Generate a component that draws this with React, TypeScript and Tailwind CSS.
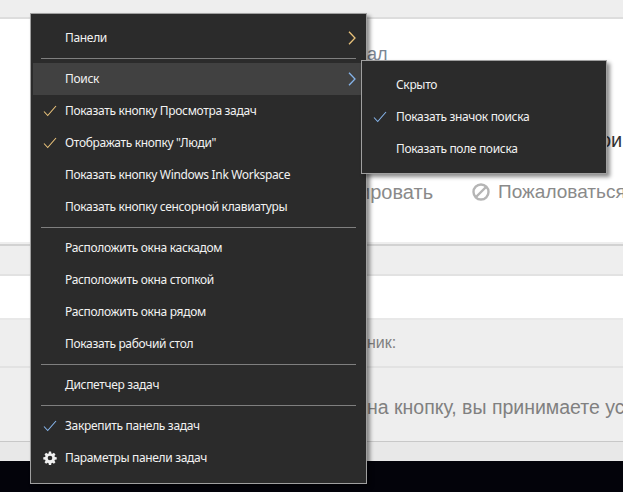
const font = "font-['Noto_Sans',sans-serif] tracking-[-0.33px]";

type MenuRow =
  | { kind: "sep" }
  | { kind: "item"; label: string; check?: "warm" | "cool"; arrow?: "warm" | "cool"; gear?: boolean; active?: boolean };

const mainRows: MenuRow[] = [
  { kind: "item", label: "Панели", arrow: "warm" },
  { kind: "sep" },
  { kind: "item", label: "Поиск", arrow: "cool", active: true },
  { kind: "item", label: "Показать кнопку Просмотра задач", check: "warm" },
  { kind: "item", label: "Отображать кнопку \"Люди\"", check: "warm" },
  { kind: "item", label: "Показать кнопку Windows Ink Workspace" },
  { kind: "item", label: "Показать кнопку сенсорной клавиатуры" },
  { kind: "sep" },
  { kind: "item", label: "Расположить окна каскадом" },
  { kind: "item", label: "Расположить окна стопкой" },
  { kind: "item", label: "Расположить окна рядом" },
  { kind: "item", label: "Показать рабочий стол" },
  { kind: "sep" },
  { kind: "item", label: "Диспетчер задач" },
  { kind: "sep" },
  { kind: "item", label: "Закрепить панель задач", check: "cool" },
  { kind: "item", label: "Параметры панели задач", gear: true },
];

const subRows: MenuRow[] = [
  { kind: "item", label: "Скрыто" },
  { kind: "item", label: "Показать значок поиска", check: "cool" },
  { kind: "item", label: "Показать поле поиска" },
];

const tint = { warm: "#e9c27a", cool: "#86b4ea" };

function Check({ tone }: { tone: "warm" | "cool" }) {
  return (
    <svg width="14" height="12" viewBox="0 0 14 12" fill="none">
      <path d="M1 6.500 4.700 10.500 13 1" stroke={tint[tone]} strokeWidth="1.100" />
    </svg>
  );
}

function Arrow({ tone }: { tone: "warm" | "cool" }) {
  return (
    <svg width="8" height="14" viewBox="0 0 8 14" fill="none">
      <path d="M1 .7 7 7 1 13.300" stroke={tint[tone]} strokeWidth="1.300" />
    </svg>
  );
}

function Gear() {
  return (
    <svg width="14" height="14" viewBox="0 0 24 24" fill="#f0f0f0">
      <path d="M13.900 1h-3.800l-.5 3.100c-.6.200-1.200.5-1.700.8L5.300 3.100 2.600 5.800l1.800 2.600c-.3.500-.6 1.100-.8 1.700L.5 10.600v3.800l3.100.5c.2.600.5 1.200.8 1.700l-1.800 2.600 2.700 2.700 2.600-1.800c.5.300 1.100.6 1.700.8l.5 3.100h3.800l.5-3.100c.6-.2 1.200-.5 1.700-.8l2.600 1.800 2.700-2.700-1.800-2.600c.3-.5.600-1.100.8-1.700l3.100-.5v-3.800l-3.100-.5c-.2-.6-.5-1.200-.8-1.700l1.800-2.600-2.700-2.700-2.600 1.800c-.5-.3-1.100-.6-1.700-.8L13.900 1ZM12 8a4 4 0 1 1 0 8 4 4 0 0 1 0-8Z" fillRule="evenodd" />
    </svg>
  );
}

function Rows({ rows, textInset }: { rows: MenuRow[]; textInset: string }) {
  return (
    <>
      {rows.map((row, i) =>
        row.kind === "sep" ? (
          <div key={i} className="h-[9px] flex items-center px-[8px]">
            <div className="h-px w-full bg-[#7f7f7f]" />
          </div>
        ) : (
          <div
            key={i}
            className={`h-8 flex items-center text-[12px] text-[#f2f2f2] ${row.active ? "bg-[#414141]" : ""}`}
          >
            <div className={`${textInset} flex justify-center pl-[2px] shrink-0`}>
              {row.check && <Check tone={row.check} />}
              {row.gear && <Gear />}
            </div>
            <span className="flex-1 whitespace-nowrap">{row.label}</span>
            {row.arrow && (
              <div className="pr-[8px] flex">
                <Arrow tone={row.arrow} />
              </div>
            )}
          </div>
        )
      )}
    </>
  );
}

export default function App() {
  return (
    <div className="relative w-[623px] h-[492px] overflow-hidden bg-white font-['Liberation_Sans',sans-serif]">
      {/* page behind the menus */}
      <div className="h-[17px] bg-[#eeeeee]" />
      <div className="h-[2px] bg-[#dddddd]" />
      <div className="h-[223px] bg-white text-[#8a8a8a] pl-[367px]">
        <div className="pt-[25px] text-[18px] leading-[20px] text-[#7b8794]">ал</div>
        <div className="pt-[64px] pl-[233px] text-[20px] leading-[24px] text-[#333333]">ои</div>
        <div className="pt-[28px] -ml-[8px] flex items-center text-[20px] leading-[24px] whitespace-nowrap">
          <span className="shrink-0">ировать</span>
          <svg className="ml-[39px] mr-[8px] shrink-0" width="18" height="18" viewBox="0 0 18 18" fill="none">
            <circle cx="9" cy="9" r="7.500" stroke="#b5b5b5" strokeWidth="2.400" />
            <path d="M4 14 14 4" stroke="#b5b5b5" strokeWidth="2.400" />
          </svg>
          <span className="shrink-0 text-[19px]">Пожаловаться</span>
        </div>
      </div>
      <div className="h-[2px] bg-[#eeeeee]" />
      <div className="h-[2px] bg-[#d2d2d2]" />
      <div className="h-[30px] bg-[#eeeeee] border-b-2 border-[#e2e2e2]" />
      <div className="h-[42px] bg-white" />
      <div className="h-[50px] bg-[#eeeeee] border-y-2 border-t-[#e8e8e8] border-b-[#e2e2e2] pl-[367px] flex items-center text-[16px] text-[#808080]">
        ник:
      </div>
      <div className="h-[74px] bg-[#eeeeee] border-b border-[#c8c8c8] pl-[367px] pt-[27px] text-[19.5px] leading-[24px] text-[#808080] whitespace-nowrap">
        на кнопку, вы принимаете ус
      </div>
      <div className="h-[19px] bg-[#e8e8e8]" />
      <div className="h-[31px] bg-[#03030a]" />

      {/* main context menu */}
      <div className={`absolute left-[30px] top-[13px] w-[337px] h-[471px] bg-[#2b2b2b] border border-[#a0a0a0] px-[2px] pt-[8px] shadow-[3px_3px_4px_rgba(0,0,0,0.45)] ${font}`}>
        <Rows rows={mainRows} textInset="w-[32px]" />
      </div>

      {/* search submenu */}
      <div className={`absolute left-[361px] top-[60px] w-[246px] h-[114px] bg-[#2b2b2b] border border-[#a0a0a0] pt-[8px] shadow-[3px_3px_4px_rgba(0,0,0,0.45)] ${font}`}>
        <Rows rows={subRows} textInset="w-[34px]" />
      </div>
    </div>
  );
}
